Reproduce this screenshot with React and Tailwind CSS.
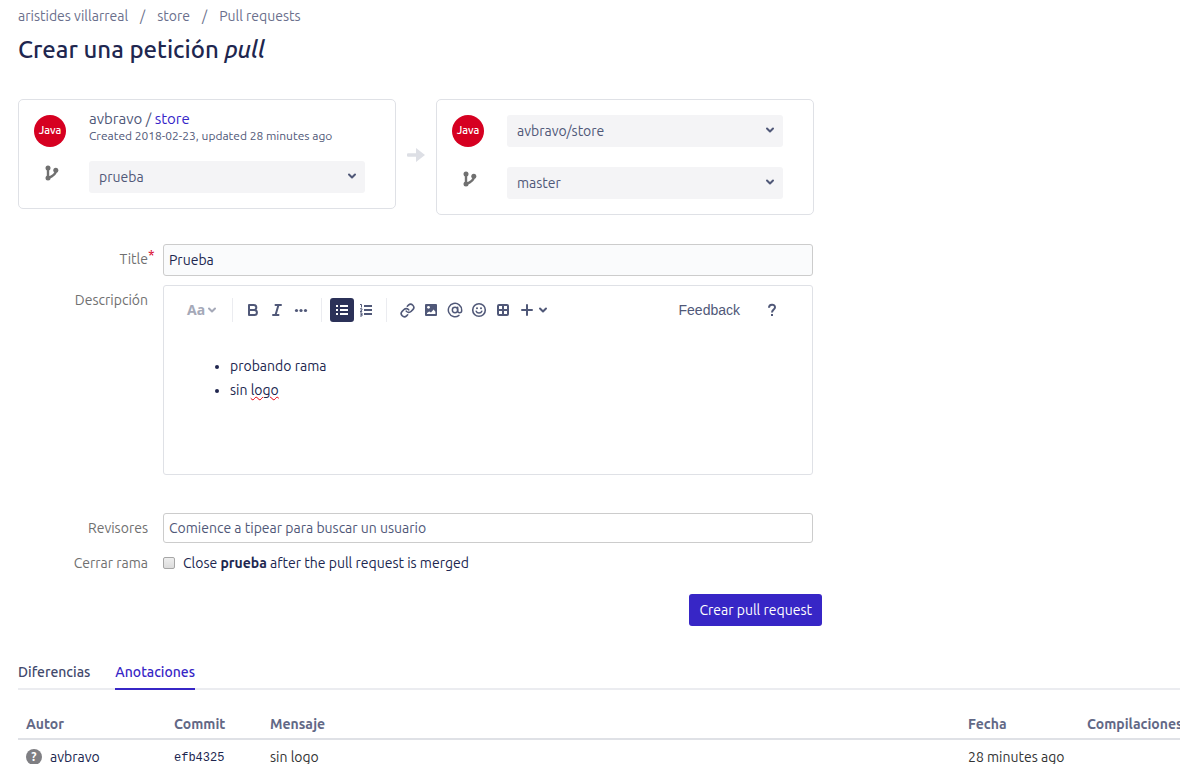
import React from "react";
import { AtSign, Link } from "lucide-react";

const commits = [
  { author: "avbravo", hash: "efb4325", message: "sin logo", date: "28 minutes ago" },
];

function Chevron({ className }) {
  return (
    <svg className={className} width="10" height="10" viewBox="0 0 10 10" fill="none" stroke="currentColor" strokeWidth="2" strokeLinecap="round" strokeLinejoin="round" aria-hidden="true">
      <path d="M2 3.5l3 3 3-3" />
    </svg>
  );
}

function BranchIcon() {
  return (
    <svg className="text-[#707070]" width="14" height="16" viewBox="0 0 14 16" fill="none" stroke="currentColor" strokeWidth="2.4" aria-hidden="true">
      <path d="M3 3v10M11 5.500c0 4-3 5.800-8 7.500" />
      <circle cx="3" cy="2.900" r="2.500" fill="currentColor" stroke="none" />
      <circle cx="3" cy="13.100" r="2.500" fill="currentColor" stroke="none" />
      <circle cx="10.800" cy="5.200" r="2.500" fill="currentColor" stroke="none" />
    </svg>
  );
}

function RepoAvatar() {
  return (
    <span className="flex size-8 shrink-0 items-center justify-center rounded-full bg-[#d60021] text-[11px] font-medium text-white">
      Java
    </span>
  );
}

function Select({ label, value }) {
  return (
    <div className="relative w-full">
      <select
        aria-label={label}
        defaultValue={value}
        className="block h-8 w-full appearance-none rounded-[3px] bg-[#f4f4f6] px-[10px] text-sm text-[#505878]"
      >
        <option>{value}</option>
      </select>
      <Chevron className="pointer-events-none absolute top-[10px] right-2 text-[#505878]" />
    </div>
  );
}

function ToolButton({ label, active, children }) {
  return (
    <button
      type="button"
      aria-label={label}
      className={
        active
          ? "flex size-6 items-center justify-center rounded-[3px] bg-[#2b3158] text-white"
          : "flex size-6 items-center justify-center rounded-[3px] text-[#505878]"
      }
    >
      {children}
    </button>
  );
}

function Glyph({ children }) {
  return (
    <svg width="24" height="24" viewBox="0 0 24 24" fill="none" stroke="currentColor" strokeWidth="2" aria-hidden="true">
      {children}
    </svg>
  );
}

function Separator() {
  return <span className="mx-2 h-6 w-px bg-[#ebecf0]" />;
}

function Toolbar() {
  return (
    <div className="flex items-center pt-3 pr-7 pl-5">
      <button type="button" aria-label="Text styles" className="flex h-6 w-10 items-center justify-start gap-[2px] pl-[3px] font-['Noto_Sans',sans-serif] text-sm font-bold text-[#a5a9b8]">
        Aa
        <Chevron />
      </button>
      <Separator />
      <ToolButton label="Bold">
        <Glyph>
          <path strokeLinejoin="round" d="M8 7h4.8a2.4 2.4 0 0 1 0 5H8zM8 12h5.4a2.5 2.5 0 0 1 0 5H8z" />
        </Glyph>
      </ToolButton>
      <ToolButton label="Italic">
        <Glyph>
          <path strokeLinecap="round" d="M10.5 7h5.5M8 17h5.5M13.5 7l-3 10" />
        </Glyph>
      </ToolButton>
      <ToolButton label="More formatting">
        <Glyph>
          <g fill="currentColor" stroke="none">
            <circle cx="7.5" cy="12.5" r="1.6" />
            <circle cx="12" cy="12.5" r="1.6" />
            <circle cx="16.5" cy="12.5" r="1.6" />
          </g>
        </Glyph>
      </ToolButton>
      <Separator />
      <ToolButton label="Bullet list" active>
        <Glyph>
          <path d="M6 8h2M6 12h2M6 16h2M10 8h8M10 12h8M10 16h8" />
        </Glyph>
      </ToolButton>
      <ToolButton label="Numbered list">
        <Glyph>
          <path d="M10 8h8M10 12h8M10 16h8" />
          <path strokeWidth="1" d="M6 6.5h1.5v3M6 10.800h2v1.200l-2 1.600h2.200M6 15h2v3H6M6.500 16.500H8" />
        </Glyph>
      </ToolButton>
      <Separator />
      <ToolButton label="Link">
        <Link size={15} strokeWidth={2.6} />
      </ToolButton>
      <ToolButton label="Image">
        <Glyph>
          <g stroke="none">
            <rect x="6" y="6" width="12" height="12" rx="1" fill="currentColor" />
            <circle cx="9.5" cy="9.3" r="1.4" fill="#fff" />
            <path fill="#fff" d="M8 16v-1l2.2-1.600 1.800 1.200 2.600-3 1.800 2.200V16z" />
          </g>
        </Glyph>
      </ToolButton>
      <ToolButton label="Mention">
        <AtSign size={16} strokeWidth={2.2} />
      </ToolButton>
      <ToolButton label="Emoji">
        <Glyph>
          <circle cx="12" cy="12" r="6.3" strokeWidth="1.6" />
          <path strokeWidth="1.5" strokeLinecap="round" d="M9.200 13.300c.8 2.400 4.800 2.400 5.600 0" />
          <circle cx="10" cy="10.300" r="1" fill="currentColor" stroke="none" />
          <circle cx="14" cy="10.300" r="1" fill="currentColor" stroke="none" />
        </Glyph>
      </ToolButton>
      <ToolButton label="Table">
        <Glyph>
          <rect x="7" y="7" width="10" height="10" rx="1" />
          <path d="M12 7v10M7 12h10" />
        </Glyph>
      </ToolButton>
      <button type="button" aria-label="Insert" className="flex items-center text-[#505878]">
        <Glyph>
          <path strokeLinecap="round" d="M12 7v10M7 12h10" />
        </Glyph>
        <Chevron className="-ml-px" />
      </button>
      <button type="button" className="mr-5 ml-auto font-['Liberation_Sans',sans-serif] text-sm text-[#505878]">
        Feedback
      </button>
      <ToolButton label="Help">
        <Glyph>
          <path strokeLinejoin="round" d="M9 9.800C9 5.700 15 5.700 15 9.300 15 11.500 12 11.500 12 14.500" />
          <path d="M11 17h2" />
        </Glyph>
      </ToolButton>
    </div>
  );
}

function Field({ label, htmlFor, required, className, children }) {
  return (
    <div className={"flex " + className}>
      <label htmlFor={htmlFor} className="w-[130px] shrink-0 pt-[5px] text-right text-[#707070]">
        {label}
        {required && <span className="absolute -mt-1 text-[#d9001f]">*</span>}
      </label>
      <div className="ml-[15px] min-w-0 flex-1">{children}</div>
    </div>
  );
}

export default function App() {
  return (
    <div className="min-h-screen overflow-x-hidden bg-white pl-[18px] font-['Ubuntu','Open_Sans',sans-serif] text-sm text-[#20264f]">
      <nav className="flex gap-3 pt-[6px] text-[#6a6f8c]">
        <a href="#owner">aristides villarreal</a>
        <span>/</span>
        <a href="#store">store</a>
        <span>/</span>
        <a href="#pulls">Pull requests</a>
      </nav>
      <h1 className="mt-2 text-2xl leading-8 font-medium">
        Crear una petición <em>pull</em>
      </h1>

      <form onSubmit={(e) => e.preventDefault()}>
        <div className="mt-[33px] flex max-w-[796px] items-start">
          <section className="flex-1 rounded-[5px] border border-[#dfe1e6] p-[15px]">
            <div className="flex gap-[23px]">
              <RepoAvatar />
              <div className="-mt-1 h-[46px] text-[#505878]">
                <p className="text-[15px] leading-4">
                  avbravo / <a href="#store" className="text-[#3525c9]">store</a>
                </p>
                <p className="text-xs leading-[18px]">Created 2018-02-23, updated 28 minutes ago</p>
              </div>
            </div>
            <div className="mt-1 flex gap-[23px] pr-[15px]">
              <span className="flex w-8 shrink-0 justify-center pt-1 pl-1">
                <BranchIcon />
              </span>
              <Select label="Source branch" value="prueba" />
            </div>
          </section>

          <svg className="mx-[10px] mt-[46px] shrink-0 text-[#dddfe5]" width="20" height="20" viewBox="0 0 20 20" fill="currentColor" aria-hidden="true">
            <path d="M2 8.200h8V3l9 7-9 7v-5.200H2a1 1 0 0 1-1-1V9.200a1 1 0 0 1 1-1z" />
          </svg>

          <section className="flex-1 rounded-[5px] border border-[#dfe1e6] p-[15px]">
            <div className="flex gap-[23px] pr-[15px]">
              <RepoAvatar />
              <Select label="Destination repository" value="avbravo/store" />
            </div>
            <div className="mt-5 flex gap-[23px] pr-[15px]">
              <span className="flex w-8 shrink-0 justify-center pt-1 pl-1">
                <BranchIcon />
              </span>
              <Select label="Destination branch" value="master" />
            </div>
          </section>
        </div>

        <div className="mt-[29px] max-w-[795px]">
          <Field label="Title" htmlFor="title" required className="">
            <input
              id="title"
              defaultValue="Prueba"
              className="block h-8 w-full rounded-[3px] border border-[#ccc] bg-[#fafbfc] px-[5px]"
            />
          </Field>
          <Field label="Descripción" htmlFor="description" className="mt-[9px]">
            <div className="min-h-[190px] rounded-[3px] border border-[#dfe1e6]">
              <Toolbar />
              <div
                id="description"
                role="textbox"
                aria-label="Descripción"
                contentEditable
                suppressContentEditableWarning
                spellCheck={false}
                className="px-5 pt-8 outline-none"
              >
                <ul className="list-disc pl-[46px] leading-6">
                  <li>probando rama</li>
                  <li>
                    sin <span className="underline decoration-red-600 decoration-wavy decoration-1">logo</span>
                  </li>
                </ul>
              </div>
            </div>
          </Field>
          <Field label="Revisores" htmlFor="reviewers" className="mt-[38px]">
            <input
              id="reviewers"
              placeholder="Comience a tipear para buscar un usuario"
              className="block h-[30px] w-full rounded-[3px] border border-[#ccc] px-[5px] placeholder:text-[#505878]"
            />
          </Field>
          <Field label="Cerrar rama" htmlFor="close" className="mt-[5px]">
            <div className="flex items-center gap-2 pt-[5px]">
              <input
                id="close"
                type="checkbox"
                className="size-3 appearance-none rounded-[2px] border border-[#a6a6a6] bg-linear-to-b from-[#eee] to-[#dcdcdc]"
              />
              <label htmlFor="close">
                Close <strong>prueba</strong> after the pull request is merged
              </label>
            </div>
          </Field>
        </div>

        <div className="mt-[21px] flex max-w-[804px] justify-end">
          <button type="submit" className="h-8 rounded-[3px] bg-[#3726c6] px-[10px] text-white">
            Crear pull request
          </button>
        </div>
      </form>

      <div className="mt-9 flex gap-[25px] border-b-2 border-[#ebecf0] font-medium">
        <a href="#diff" className="pb-[6px] text-[#42496c]">Diferencias</a>
        <a href="#commits" className="-mb-[2px] border-b-2 border-[#3726c6] pb-[6px] text-[#3726c6]">Anotaciones</a>
      </div>

      <table className="mt-5 w-full table-fixed text-left whitespace-nowrap">
        <thead>
          <tr className="border-b-2 border-[#dfe1e6] text-[#626886]">
            <th className="w-[148px] px-2 pt-1 pb-1">Autor</th>
            <th className="w-24 px-2">Commit</th>
            <th className="px-2">Mensaje</th>
            <th className="w-[119px] px-2">Fecha</th>
            <th className="w-[101px] px-2">Compilaciones</th>
          </tr>
        </thead>
        <tbody>
          {commits.map((c) => (
            <tr key={c.hash}>
              <td className="px-2 py-[7px]">
                <a href="#author" className="flex items-center gap-2">
                  <span className="flex size-4 items-center justify-center rounded-full bg-[#7f7f83] text-xs font-bold text-white">?</span>
                  {c.author}
                </a>
              </td>
              <td className="px-2 pt-[2px] font-['Liberation_Mono',monospace] text-xs">
                <a href="#commit">{c.hash}</a>
              </td>
              <td className="px-2 text-[#333]">{c.message}</td>
              <td className="px-2 text-[#333]">{c.date}</td>
              <td />
            </tr>
          ))}
        </tbody>
      </table>
    </div>
  );
}
